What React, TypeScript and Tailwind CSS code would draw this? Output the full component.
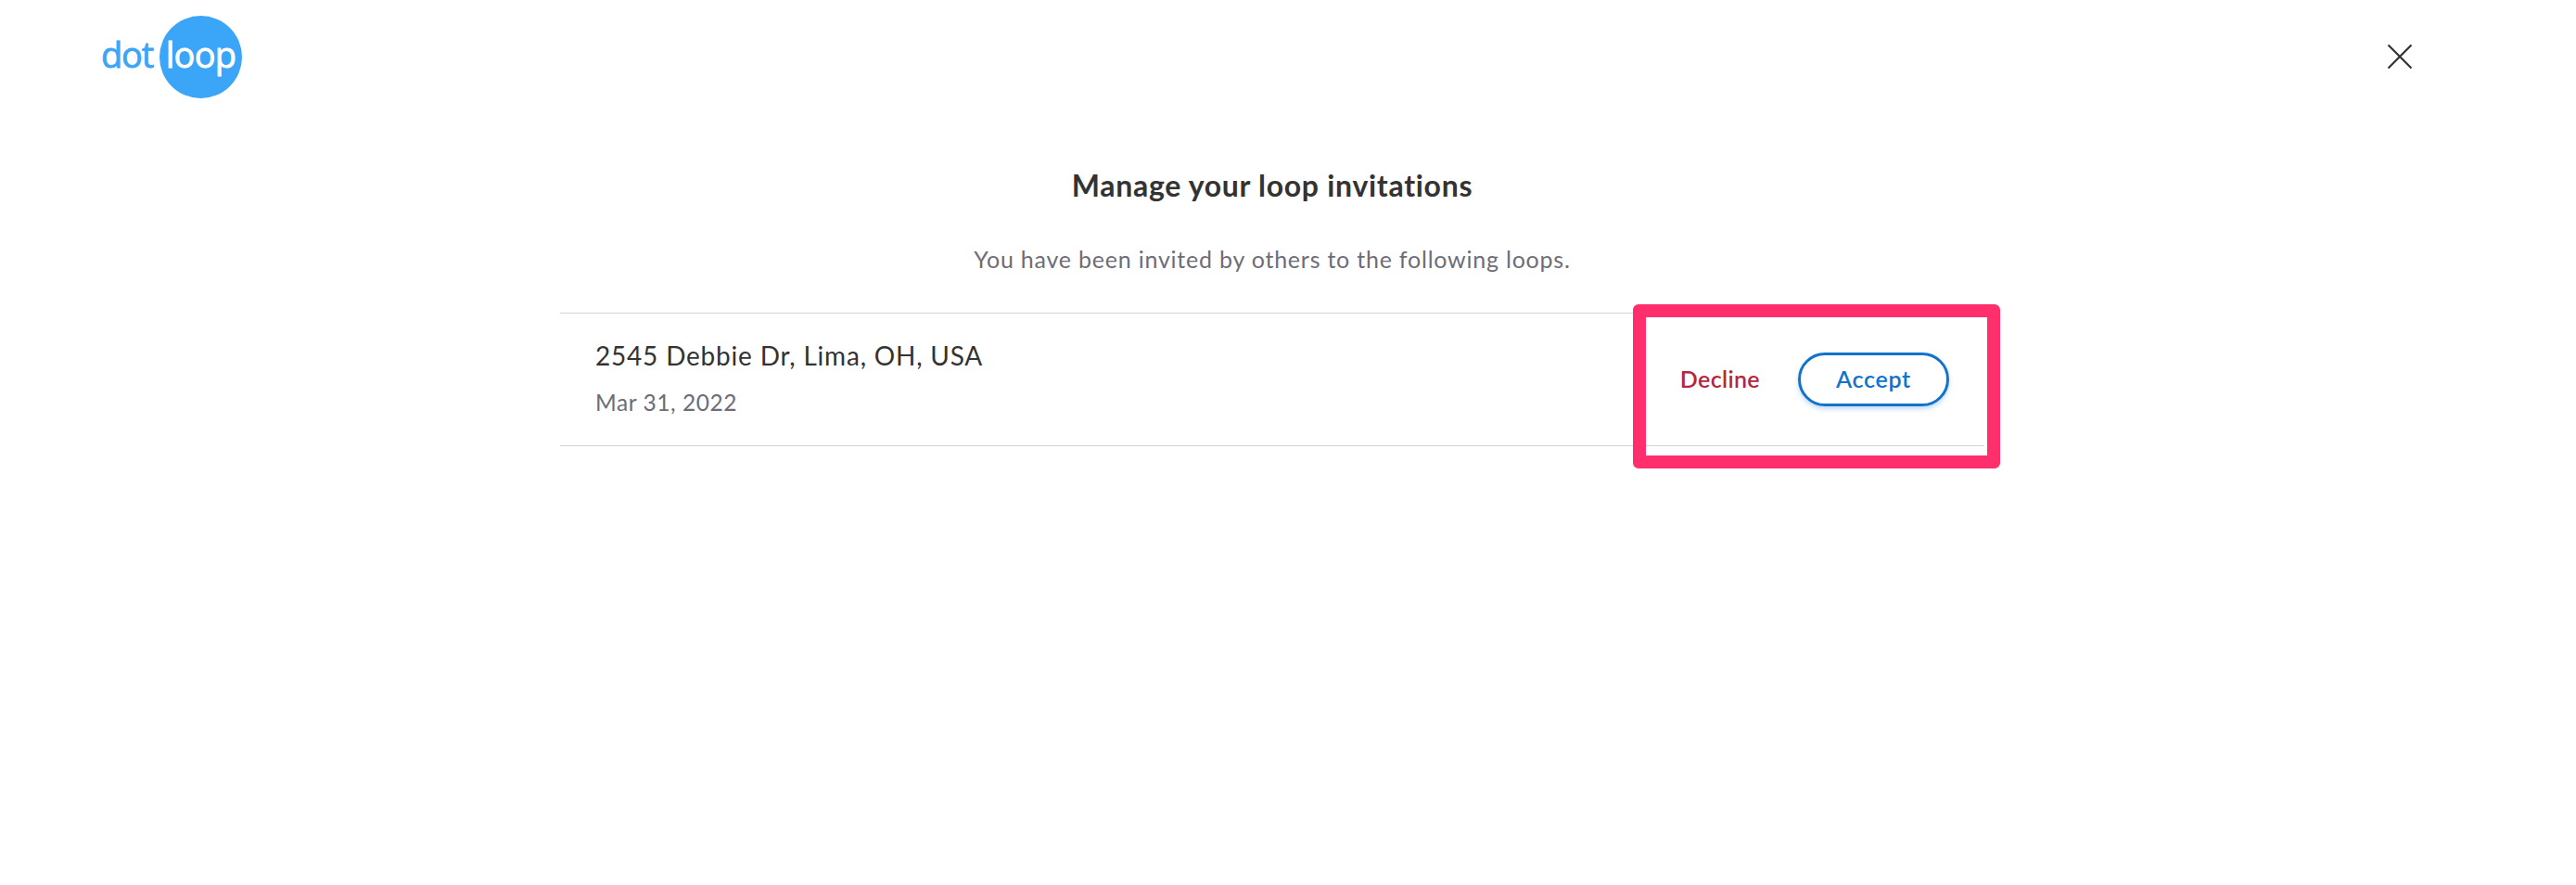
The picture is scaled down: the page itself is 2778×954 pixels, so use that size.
import React from 'react';

interface Invitation {
  id: number;
  name: string;
  date: string;
}

const invitations: Invitation[] = [
  { id: 1, name: '2545 Debbie Dr, Lima, OH, USA', date: 'Mar 31, 2022' },
];

const Logo: React.FC = () => (
  <div className="flex items-center font-['Open_Sans',sans-serif] text-[38px] leading-[52px] font-medium [-webkit-text-stroke:0.8px_currentColor]">
    <span className="w-[63px] pb-[8px] whitespace-nowrap tracking-[-1.2px] text-[#3ba5f8]">dot</span>
    <span className="flex h-[89px] w-[89px] items-center justify-center rounded-full bg-[#3ba5f8] pb-[8px] tracking-[-0.8px] text-white">
      loop
    </span>
  </div>
);

const CloseIcon: React.FC = () => (
  <svg width="26" height="26" viewBox="0 0 26 26" fill="none" stroke="#333333" strokeWidth="2.2">
    <path d="M0.5 0.5L25.5 25.5M25.5 0.5L0.5 25.5" />
  </svg>
);

const InvitationRow: React.FC<{ invitation: Invitation }> = ({ invitation }) => (
  <li className="relative flex h-[143px] items-center justify-between border-b border-[#d3d3d3] pr-[38px] pl-[38px]">
    <div className="flex flex-col pb-[4px]">
      <span className="text-[28px] leading-[40px] tracking-[0.8px] text-[#333333]">
        {invitation.name}
      </span>
      <span className="mt-[13px] text-[24.5px] leading-[36px] tracking-[0.55px] text-[#6d6d78]">
        {invitation.date}
      </span>
    </div>
    <div className="flex items-center gap-[41px] text-[25px] font-semibold tracking-[0.35px]">
      <button className="text-[#b3283f]">Decline</button>
      <button className="h-[58px] w-[163px] rounded-full border-3 border-[#1272cc] tracking-[0.7px] text-[#1272cc] shadow-[0_3px_5px_rgba(18,114,204,0.25)]">
        Accept
      </button>
    </div>
    {/* highlight around the row actions */}
    <div className="pointer-events-none absolute top-[-10px] right-[-17px] h-[177px] w-[396px] rounded-[6px] border-14 border-[#ff2f6d]" />
  </li>
);

const App: React.FC = () => {
  return (
    <div className="h-[954px] w-[2778px] overflow-hidden bg-white font-['Lato',sans-serif]">
      <header className="flex h-[123px] items-center justify-between pr-[177px] pl-[109px]">
        <Logo />
        <button aria-label="Close" className="pb-px">
          <CloseIcon />
        </button>
      </header>
      <main className="ml-[604px] w-[1536px]">
        <h1 className="pt-[54px] text-center text-[32px] leading-[46px] font-bold tracking-[0.7px] text-[#333333]">
          Manage your loop invitations
        </h1>
        <p className="mt-[38px] text-center text-[25px] leading-[36px] tracking-[0.78px] text-[#6d6d78]">
          You have been invited by others to the following loops.
        </p>
        <ul className="mt-[40px] border-t border-[#d3d3d3]">
          {invitations.map(invitation => (
            <InvitationRow key={invitation.id} invitation={invitation} />
          ))}
        </ul>
      </main>
    </div>
  );
};

export default App;
